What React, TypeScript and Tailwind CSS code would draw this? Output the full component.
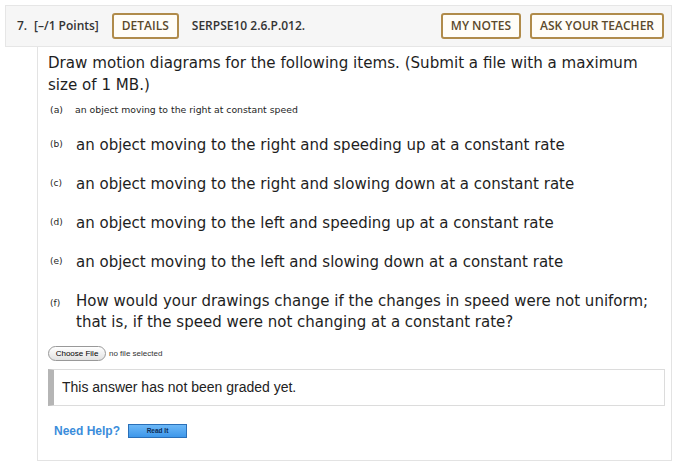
const parts = [
  { l: "(b)", t: "an object moving to the right and speeding up at a constant rate" },
  { l: "(c)", t: "an object moving to the right and slowing down at a constant rate" },
  { l: "(d)", t: "an object moving to the left and speeding up at a constant rate" },
  { l: "(e)", t: "an object moving to the left and slowing down at a constant rate" },
];

const btn =
  "h-[26px] px-[8px] border-2 border-[#b08b4a] rounded-[3px] bg-[#fffdf8] text-[#5c4a2c] text-[12px] font-semibold flex items-center";

export default function App() {
  return (
    <div className="w-[675px] h-[463px] bg-white pt-[5px] pl-[5px] font-['Open_Sans',sans-serif]">
      <div className="w-[667px] h-[42px] bg-[#f6f6f6] border border-[#e6e6e6] flex items-center pl-[11px] pr-[7px]">
        <span className="text-[12px] font-semibold text-[#333] w-[17px]">7.</span>
        <span className="text-[12px] font-semibold text-[#333]">[–/1 Points]</span>
        <div className={btn + " ml-[13px]"}>DETAILS</div>
        <span className="ml-[13px] text-[12px] font-semibold text-[#333]">SERPSE10 2.6.P.012.</span>
        <div className="ml-auto flex gap-[9px]">
          <div className={btn}>MY NOTES</div>
          <div className={btn}>ASK YOUR TEACHER</div>
        </div>
      </div>
      <div className="ml-[32px] w-[635px] h-[414px] border border-t-0 border-[#e3e3e3] pl-[10px] pt-[5px] font-['DejaVu_Sans',sans-serif] text-[#1e1e1e]">
        <p className="text-[15.1px] leading-[22px] pr-[14px]">
          Draw motion diagrams for the following items. (Submit a file with a maximum size of 1 MB.)
        </p>
        <div className="flex items-center mt-[7px] text-[9.3px] h-[14px]">
          <span className="w-[20px] pl-[2px]">(a)</span>
          <span className="ml-[7px]">an object moving to the right at constant speed</span>
        </div>
        {parts.map((p, i) => (
          <div key={i} className={"flex items-center h-[20px] " + (i === 0 ? "mt-[18px]" : "mt-[19px]")}>
            <span className="w-[28px] pl-[2px] text-[9px]">{p.l}</span>
            <span className="text-[15px]">{p.t}</span>
          </div>
        ))}
        <div className="flex mt-[19px] leading-[21px]">
          <span className="w-[28px] pl-[2px] text-[9px] pt-[2px]">(f)</span>
          <span className="text-[15px]">
            How would your drawings change if the changes in speed were not uniform;
            <br />
            that is, if the speed were not changing at a constant rate?
          </span>
        </div>
        <div className="flex items-center mt-[13px] font-['Liberation_Sans',sans-serif]">
          <div className="h-[15px] w-[58px] rounded-full border border-[#999] bg-gradient-to-b from-white to-[#e2e2e2] text-[8px] flex items-center justify-center text-black">
            Choose File
          </div>
          <span className="ml-[3px] text-[8px] text-[#333]">no file selected</span>
        </div>
        <div className="mt-[8px] mr-[6px] h-[37px] border border-[#dcdcdc] border-l-[6px] border-l-[#b5b5b5] flex items-center pl-[8px] font-['Liberation_Sans',sans-serif] text-[14px] text-[#222]">
          This answer has not been graded yet.
        </div>
        <div className="flex items-center mt-[16px] pl-[6px] font-['Liberation_Sans',sans-serif]">
          <span className="text-[#3b8ddb] font-bold text-[12px]">Need Help?</span>
          <div className="ml-[8px] w-[59px] h-[14px] bg-gradient-to-b from-[#6cb8f7] to-[#3d97ea] border border-[#2a6fb8] flex items-center justify-center text-[6.5px] font-bold text-[#0b2a55]">
            Read It
          </div>
        </div>
      </div>
    </div>
  );
}
